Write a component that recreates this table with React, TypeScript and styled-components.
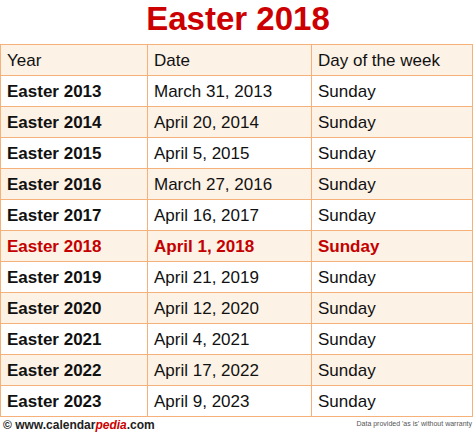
import React from "react";
import styled, { createGlobalStyle } from "styled-components";

const Global = createGlobalStyle`
  html, body { margin: 0; padding: 0; background: #fff; }
  body { font-family: "Liberation Sans", Arial, sans-serif; }
`;

const Page = styled.div`
  width: 474px;
  height: 433px;
  overflow: hidden;
  display: flex;
  flex-direction: column;
`;

const Title = styled.h1`
  margin: 0;
  height: 44px;
  display: flex;
  align-items: flex-start;
  justify-content: center;
  font-size: 33px;
  line-height: 37px;
  font-weight: bold;
  color: #cc0000;
  padding-left: 2px;
  box-sizing: border-box;
`;

const Table = styled.div`
  display: grid;
  grid-template-columns: 147px 164px 161px;
  width: 473px;
  border-top: 1px solid #f6b079;
  border-left: 1px solid #f6b079;
  box-sizing: border-box;
`;

const Cell = styled.div<{ $shade: boolean; $bold: boolean; $red: boolean }>`
  height: 31px;
  box-sizing: border-box;
  display: flex;
  align-items: center;
  padding-left: 6px;
  padding-top: 1px;
  border-right: 1px solid #f6b079;
  border-bottom: 1px solid #f6b079;
  background: ${(p) => (p.$shade ? "#fdf2e6" : "#ffffff")};
  font-size: 17px;
  font-weight: ${(p) => (p.$bold ? "bold" : "normal")};
  color: ${(p) => (p.$red ? "#c40000" : "#111")};
  white-space: nowrap;
`;

const Footer = styled.div`
  display: flex;
  justify-content: space-between;
  align-items: flex-end;
  padding: 0 2px 0 3px;
  height: 16px;
`;

const Brand = styled.span`
  font-size: 12px;
  font-weight: bold;
  color: #222;
  line-height: 15px;
`;

const Pedia = styled.span`
  color: #cc0000;
  font-style: italic;
`;

const Note = styled.span`
  font-size: 7px;
  color: #555;
  line-height: 10px;
  padding-bottom: 4px;
`;

const rows: [string, string, string][] = [
  ["Easter 2013", "March 31, 2013", "Sunday"],
  ["Easter 2014", "April 20, 2014", "Sunday"],
  ["Easter 2015", "April 5, 2015", "Sunday"],
  ["Easter 2016", "March 27, 2016", "Sunday"],
  ["Easter 2017", "April 16, 2017", "Sunday"],
  ["Easter 2018", "April 1, 2018", "Sunday"],
  ["Easter 2019", "April 21, 2019", "Sunday"],
  ["Easter 2020", "April 12, 2020", "Sunday"],
  ["Easter 2021", "April 4, 2021", "Sunday"],
  ["Easter 2022", "April 17, 2022", "Sunday"],
  ["Easter 2023", "April 9, 2023", "Sunday"],
];

export default function App() {
  return (
    <Page>
      <Global />
      <Title>Easter 2018</Title>
      <Table>
        {["Year", "Date", "Day of the week"].map((h) => (
          <Cell key={h} $shade $bold={false} $red={false}>
            {h}
          </Cell>
        ))}
        {rows.map((r, i) => {
          const current = r[0] === "Easter 2018";
          const shade = i % 2 === 1;
          return r.map((c, j) => (
            <Cell
              key={`${i}-${j}`}
              $shade={shade}
              $bold={current || j === 0}
              $red={current}
            >
              {c}
            </Cell>
          ));
        })}
      </Table>
      <Footer>
        <Brand>
          © www.calendar<Pedia>pedia</Pedia>.com
        </Brand>
        <Note>Data provided 'as is' without warranty</Note>
      </Footer>
    </Page>
  );
}
